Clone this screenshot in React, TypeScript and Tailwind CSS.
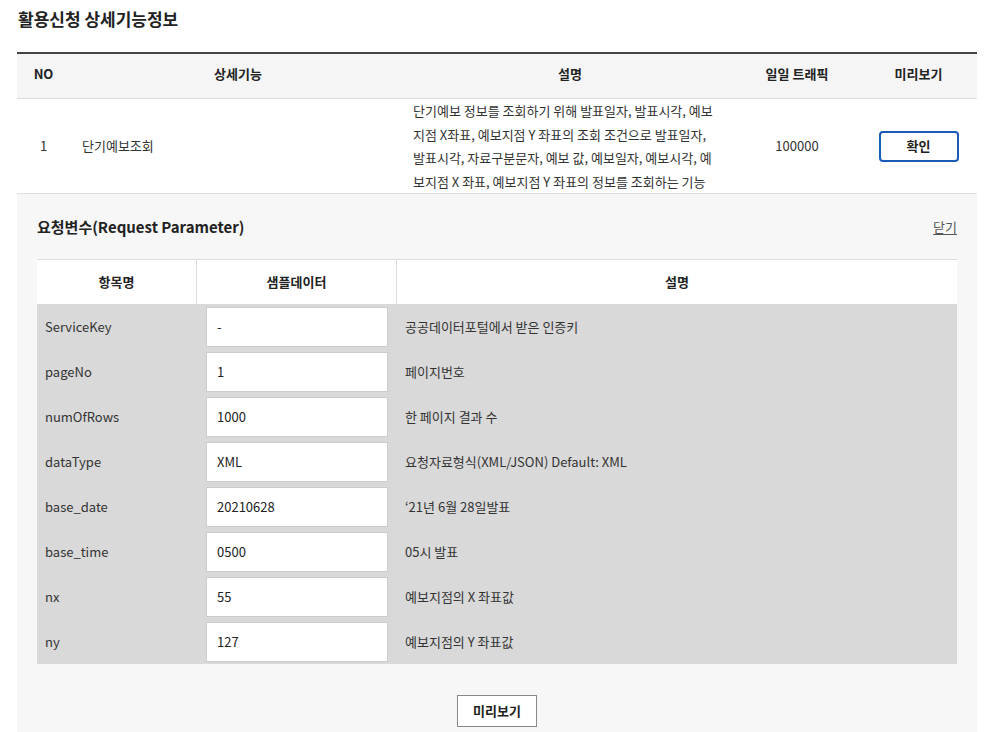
const params = [
  { name: "ServiceKey", value: "-", desc: "공공데이터포털에서 받은 인증키" },
  { name: "pageNo", value: "1", desc: "페이지번호" },
  { name: "numOfRows", value: "1000", desc: "한 페이지 결과 수" },
  { name: "dataType", value: "XML", desc: "요청자료형식(XML/JSON) Default: XML" },
  { name: "base_date", value: "20210628", desc: "‘21년 6월 28일발표" },
  { name: "base_time", value: "0500", desc: "05시 발표" },
  { name: "nx", value: "55", desc: "예보지점의 X 좌표값" },
  { name: "ny", value: "127", desc: "예보지점의 Y 좌표값" },
]

export default function App() {
  return (
    <div className="min-h-screen bg-white text-[13px] text-[#333] [font-family:'Noto_Sans_CJK_KR','Noto_Sans',sans-serif]">
      <h2 className="px-[18px] pt-[8px] text-[17px] font-bold leading-[22px] text-[#222]">
        활용신청 상세기능정보
      </h2>

      <div className="mx-[17px] mt-[22px] border-t-2 border-[#444]">
        {/* header */}
        <div className="flex h-[45px] items-center border-b border-[#ddd] bg-[#f5f5f5] pb-[4px] font-bold text-[#222]">
          <div className="w-[53px] text-center">NO</div>
          <div className="w-[336px] text-center">상세기능</div>
          <div className="w-[328px] text-center">설명</div>
          <div className="w-[126px] text-center">일일 트래픽</div>
          <div className="flex-1 text-center">미리보기</div>
        </div>

        {/* row */}
        <div className="flex items-center border-b border-[#ddd]">
          <div className="w-[53px] text-center">1</div>
          <div className="w-[336px] pl-[12px]">단기예보조회</div>
          <div className="w-[328px] pl-[7px] leading-[23.5px]">
            단기예보 정보를 조회하기 위해 발표일자, 발표시각, 예보
            <br />
            지점 X좌표, 예보지점 Y 좌표의 조회 조건으로 발표일자,
            <br />
            발표시각, 자료구분문자, 예보 값, 예보일자, 예보시각, 예
            <br />
            보지점 X 좌표, 예보지점 Y 좌표의 정보를 조회하는 기능
          </div>
          <div className="w-[126px] text-center">100000</div>
          <div className="flex flex-1 justify-center">
            <button className="h-[31px] w-[80px] rounded-[4px] border-2 border-[#1a5bb8] bg-white font-bold text-[#222]">
              확인
            </button>
          </div>
        </div>

        {/* request parameter panel */}
        <div className="bg-[#f7f7f7] px-[20px] pb-[10px] pt-[23px]">
          <div className="flex items-center justify-between">
            <h3 className="text-[15px] font-bold leading-[20px] text-[#222]">요청변수(Request Parameter)</h3>
            <a className="text-[13px] leading-[20px] text-[#555] underline underline-offset-2">닫기</a>
          </div>

          <div className="mt-[22px] border-t border-[#ddd]">
            <div className="flex h-[44px] items-center bg-white font-bold text-[#222]">
              <div className="flex h-full w-[160px] items-center justify-center border-r border-[#ddd]">항목명</div>
              <div className="flex h-full w-[200px] items-center justify-center border-r border-[#ddd]">샘플데이터</div>
              <div className="flex-1 text-center">설명</div>
            </div>
            <div className="bg-[#d9d9d9]">
              {params.map((p) => (
                <div key={p.name} className="flex h-[45px] items-center">
                  <div className="w-[160px] pl-[8px]">{p.name}</div>
                  <div className="w-[200px] pl-[9px] pr-[9px]">
                    <div className="flex h-[40px] items-center border border-[#ccc] bg-white pl-[10px] text-[#222]">
                      {p.value}
                    </div>
                  </div>
                  <div className="flex-1 pl-[8px]">{p.desc}</div>
                </div>
              ))}
            </div>
          </div>

          <div className="mt-[31px] flex justify-center">
            <button className="h-[32px] w-[80px] border border-[#888] bg-white font-bold text-[#222]">미리보기</button>
          </div>
        </div>
      </div>
    </div>
  )
}
